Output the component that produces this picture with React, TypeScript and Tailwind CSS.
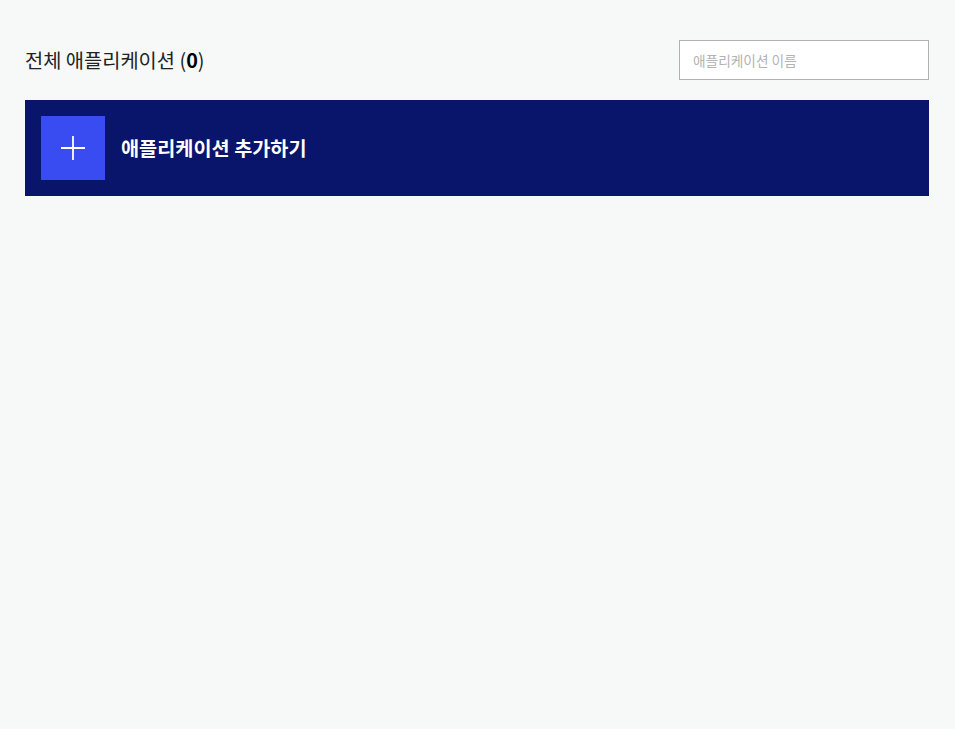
export default function App() {
  const count = 0;
  return (
    <div
      className="min-h-[729px] bg-[#f7f8f8] px-[25px] pt-[40px]"
      style={{ fontFamily: '"Noto Sans CJK KR", "Noto Sans", sans-serif' }}
    >
      <div className="flex items-center justify-between h-[40px] pr-[1px]">
        <h2 className="text-[19.8px] text-[#222]">
          전체 애플리케이션 (<span className="font-bold text-black">{count}</span>)
        </h2>
        <input
          type="text"
          placeholder="애플리케이션 이름"
          className="w-[250px] h-[40px] border border-[#b1b1b1] bg-white px-[13px] text-[13.7px] text-[#333] placeholder:text-[#b3b3b3] outline-none"
        />
      </div>

      <button className="mt-[20px] w-[904px] h-[96px] bg-[#08156a] flex items-center gap-[16px] px-[16px] text-left">
        <span className="w-[64px] h-[64px] bg-[#384cf2] flex items-center justify-center shrink-0">
          <svg width="26" height="26" viewBox="0 0 26 26">
            <path d="M13 1v24M1 13h24" stroke="white" strokeWidth="1.8" />
          </svg>
        </span>
        <span className="text-white text-[19.7px] font-bold">애플리케이션 추가하기</span>
      </button>
    </div>
  );
}
